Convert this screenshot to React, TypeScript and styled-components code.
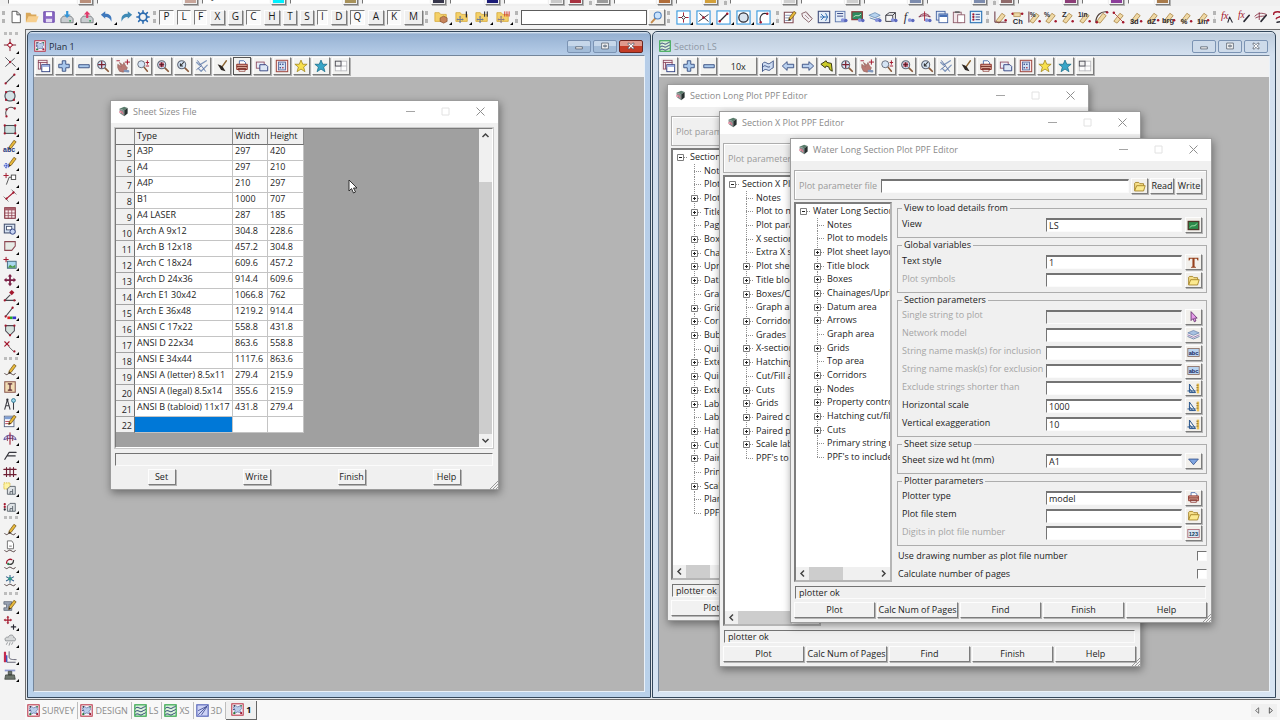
import React, { useId } from 'react';
import styled, { createGlobalStyle, css } from 'styled-components';

const GlobalStyle = createGlobalStyle`
  *, *::before, *::after { box-sizing: border-box; }
  html, body, #root { height: 100%; }
  body { margin: 0; background: #f0f0f0; overflow: hidden; }
  body, button, input, table, legend { font-family: "Open Sans", "Noto Sans", sans-serif; font-size: 9px; color: #1c1c1c; }
`;

/* ---------- shared edges ---------- */

const raised = css`
  border: 1px solid;
  border-color: #fdfdfd #7c7c7c #7c7c7c #fdfdfd;
  box-shadow: 1px 1px 0 #b4b4b4;
`;
const sunken = css`
  border: 1px solid;
  border-color: #747474 #fbfbfb #fbfbfb #747474;
`;

/* ---------- icons ---------- */

const RED = '#a3182e';
const INK = '#2a2a33';
const NAVY = '#28397c';
const STEEL = '#7f96bb';

const line = (d: string, stroke = INK, w = 1.2, fill = 'none') => (
  <path d={d} stroke={stroke} strokeWidth={w} fill={fill} strokeLinecap="round" strokeLinejoin="round" />
);
const dot = (x: number, y: number, c = RED, r = 1.3) => <circle cx={x} cy={y} r={r} fill={c} />;
const word = (t: string, x: number, y: number, c = INK, s = 7) => (
  <text x={x} y={y} fontSize={s} fontWeight="700" fontFamily="Liberation Sans, sans-serif" fill={c}>{t}</text>
);
const pencil = (
  <>
    <path d="M7 9 12.500 1.500 15 3.200 9.500 10.500 6.500 12z" fill="#e8b93a" stroke="#6b4d16" strokeWidth=".8" />
    <path d="M6.500 12 7 9.500 9 11z" fill="#33281a" />
  </>
);
const lens = (extra: React.ReactNode) => (
  <>
    {line('M9.800 9.800 14 14', '#8b5a3a', 2)}
    <circle cx="6.500" cy="6.500" r="4.600" fill="#d5e4f4" stroke="#5f6675" strokeWidth="1.200" />
    {extra}
  </>
);
const planMark = (
  <>
    <rect x="1" y="1" width="14" height="14" fill="#f7f3f8" stroke="#b6263a" strokeWidth="1.200" />
    <path d="M3 5 6 3 8 5 12 3 13 7 11 9 13 12 8 11 4 13 5 9z" fill="#b9cdea" stroke="#6472a4" strokeWidth=".9" />
    {dot(4, 3.5, INK, 1)}{dot(12.5, 12.5)}{dot(4, 12.5, '#2b7d3c')}{dot(12.5, 3.5, '#2b7d3c', 1)}{dot(3.5, 8, NAVY, 1)}
  </>
);
const waveMark = (
  <>
    <rect x="1" y="1" width="14" height="14" fill="#d9f2d9" stroke="#2ca345" strokeWidth="1.400" />
    {line('M2 5c3-3 5 2 8 0s3-1 4-2M2 9c3-3 5 2 8 0s3-1 4-2M2 13c3-3 5 2 8 0s3-1 4-2', '#1d2f6c', 1.2)}
  </>
);
const folder = (
  <>
    <path d="M2 13V4l1-1h4l1.500 1.500H13V7" fill="#f7e08a" stroke="#9c7a1b" strokeWidth="1" />
    <path d="M2 13.500 4.500 7H15l-2 6.500z" fill="#fbe98f" stroke="#9c7a1b" strokeWidth="1" />
  </>
);
const bigFolder = <path d="M1 13V3h5l1.500 2H14v8z" fill="#f4d068" stroke="#d1a02a" strokeWidth=".8" />;
const blueBox = <rect x="1" y="1" width="14" height="14" fill="#fff" stroke="#3b9be0" strokeWidth="1.200" />;
const tag = <path d="M3 12 9.500 3.500 13 6 6.500 14z" fill="#efd9a6" stroke="#b08b4c" strokeWidth=".9" />;
const building = <path d="M5 14V8l3-3h6v9zM8 11h3M8 14v-3M11 14V8" fill="#dfe3e6" stroke="#555d66" strokeWidth="1" />;
const printer = (
  <>
    <path d="M5 6V2h5l2 2v2" fill="#fff" stroke="#4467a8" strokeWidth="1" />
    <path d="M2 6h12v6H2z" fill="#dba596" stroke="#8b2f25" strokeWidth="1.100" />
    {line('M2.500 8.500h11M4 11h8', '#6a221b', 1)}
    <path d="M4.500 12h7v2h-7z" fill="#fff" stroke="#7b1f19" strokeWidth=".8" />
  </>
);
const star = (c: string, s: string) => (
  <path d="M8 1.200 10 6h5l-4 3.200 1.500 5.300L8 11.500l-4.500 3L5 9.200 1 6h5z" fill={c} stroke={s} strokeWidth=".9" />
);
const cubes = <><circle cx="10" cy="11.500" r="2.200" fill="#8793dc" /><circle cx="13.500" cy="12" r="2" fill="#5b68bd" /></>;
const arrows4 = (c: string) => (
  <path d="M8 1 10.500 4H9v3h3V5.500L15 8l-3 2.500V9H9v3h1.500L8 15l-2.500-3H7V9H4v1.500L1 8l3-2.500V7h3V4H5.500z" fill={c} />
);
const curve = line('M2 12c3 4 4-2 7 0s4 2 5 0', '#4d3b3b', 1.1);

const glyphs: Record<string, React.ReactNode> = {
  newFile: <path d="M3.500 1.500h5.500l4 4v9H3.500zM9 1.500V5.500H13" fill="#fff" stroke="#4a4a4a" strokeWidth="1" />,
  open: <><path d="M1 14V3h5l1.500 2H13v3" fill="#d9a85b" /><path d="M1 14 4 7h11.500L13 14z" fill="#f7cf8e" /></>,
  save: <><path d="M2 2h12v12H2z" fill="#8b69c4" stroke="#6440a6" strokeWidth="1" /><path d="M4.500 2.500h7V7h-7z" fill="#fff" /><path d="M4.500 10h7v4h-7z" fill="#e5dcf3" /></>,
  importDisk: <><path d="M1 10 3.500 7h9L15 10v4.500H1z" fill="#c8ccd0" stroke="#5c6166" strokeWidth=".8" /><path d="M7 1h2.500v4H12L8 9 4.500 5H7z" fill="#3595d8" />{dot(11.5, 12.3, '#2aa052', 1)}</>,
  exportDisk: <><path d="M1 10 3.500 7h9L15 10v4.500H1z" fill="#c8ccd0" stroke="#5c6166" strokeWidth=".8" /><path d="M7 9h2.500V5H12L8 1 4.500 5H7z" fill="#e03a6c" />{dot(11.5, 12.3, '#2aa052', 1)}</>,
  undo: <path d="M1 5.500 6 1.500v2.800c5 0 8 2 7 9C11 9 9 8 6 8v2z" fill="#3f79bd" />,
  redo: <path d="M15 5.500 10 1.500v2.800c-5 0-8 2-7 9C5 9 7 8 10 8v2z" fill="#3f8ab5" />,
  gear: <><circle cx="8" cy="8" r="4.300" fill="none" stroke="#2d6cb0" strokeWidth="2" />{line('M8 1v2M8 13v2M1 8h2M13 8h2M3 3l1.500 1.500M11.500 11.500 13 13M3 13l1.500-1.500M11.500 4.500 13 3', '#2d6cb0', 1.8)}</>,
  folderCube: <>{bigFolder}<path d="m11 7 4 2v4l-4 2-4-2V9z" fill="#c7835a" stroke="#7c4628" strokeWidth=".7" /></>,
  folderOne: <>{bigFolder}<g transform="translate(1 6) scale(.6)">{arrows4('#6c7c96')}</g>{line('M13 2v6', INK, 1.4)}</>,
  folderTwo: <>{bigFolder}<g transform="translate(1 6) scale(.6)">{arrows4('#6c7c96')}</g>{line('M11 2v5M14 2v5', INK, 1.2)}</>,
  folderThree: <>{bigFolder}<g transform="translate(1 6) scale(.6)">{arrows4('#8d7c86')}</g>{line('M10 2v5M12.500 2v5M15 2v5', '#c22', 1)}</>,
  search: <>{line('M6.500 9 2 14', '#c58a4a', 2.4)}<circle cx="9.500" cy="5.500" r="4.300" fill="#c9e2fb" stroke="#4b7fc0" strokeWidth="1.300" /></>,
  snapPoint: <>{blueBox}{line('M8 3v10M3 8h10', RED, 1)}<path d="M8 6l2 2-2 2-2-2z" fill="#fff" stroke={INK} /></>,
  snapCross: <>{blueBox}{line('M4 4l9 8M3 12l10-7', INK, 1)}{dot(8, 8)}</>,
  snapLine: <>{blueBox}{line('M4 12 12 4', INK, 1.3)}{dot(4, 12)}{dot(12, 4)}</>,
  snapCircle: <>{blueBox}<circle cx="8" cy="8" r="5" fill="#d9e3ee" stroke={INK} strokeWidth="1.300" /></>,
  snapArc: <>{blueBox}{line('M12 4C6 2 3 8 5 13', INK, 1.2)}{dot(12, 4)}{dot(5, 13)}</>,
  notePencil: <><path d="M1.500 2.500h10v12h-10z" fill="#fff" stroke="#7d4650" strokeWidth="1.200" />{line('M3 6h6M3 9h4M3 12h6', '#7788aa', 1)}{pencil}</>,
  tagPen: <><path d="M2 4 7 2l7 8-4 4-7-6z" fill="#f2eef0" stroke="#7f5a60" strokeWidth="1" />{line('M6 6l4 4M8 4l5 5', '#8d6a72', .8)}</>,
  sheetMove: <><rect x="1.500" y="1.500" width="13" height="13" fill="#e4edf8" stroke="#45537f" strokeWidth="1.300" />{line('M4 8h8M8 8 5 5M8 8l-3 3M10 4l2 4-2 4', '#2e6ab0', 1.1)}</>,
  sheetCubes: <><rect x="1.500" y="1.500" width="11" height="12" fill="#e4edf8" stroke="#5671a8" strokeWidth="1" />{line('M4 4h6M4 7h6', NAVY, 1)}{cubes}</>,
  viewCubes: <><rect x="1" y="2" width="12" height="9" fill="#2c8b60" stroke="#8c3d3d" strokeWidth="1.400" />{line('M3 8c3-4 5 1 8-3', '#e2f5d8', 1)}{cubes}</>,
  layersCubes: <><path d="M1 6 8 3l6 3-6 3z" fill="#b7d3ee" stroke="#5881ad" strokeWidth=".8" /><path d="M2 9l6 2 6-2" fill="none" stroke="#5881ad" />{cubes}</>,
  boxCubes: <><path d="M2 6 6 3h7v7l-3 3H2zM2 6h8v7M10 6l3-3" fill="#f6f6f6" stroke={INK} strokeWidth="1" />{cubes}</>,
  fxCubes: <><text x="3" y="12" fontSize="14" fontStyle="italic" fontFamily="Liberation Serif, serif" fill={INK}>f</text>{cubes}</>,
  sectionCubes: <><path d="M1 8c3-5 10-5 13 0-4-2-9-2-13 0z" fill="#ead0d8" stroke="#7d2c45" strokeWidth="1" />{line('M7.500 2v10', RED, 1)}{cubes}</>,
  windowsBlue: <><rect x="1.500" y="1.500" width="10" height="10" fill="#dfe9f6" stroke="#3f5f9f" /><rect x="4.500" y="4.500" width="10" height="10" fill="#fff" stroke="#3f5f9f" /><path d="M5 5h9v3H5z" fill="#476fb5" /></>,
  paste: <><rect x="1.500" y="2.500" width="9" height="12" fill="#f2e6e9" stroke="#8c5a68" /><rect x="6.500" y="5.500" width="8" height="9" fill="#fff" stroke="#8c5a68" />{line('M4 2.500h4', '#666', 2)}</>,
  checklist: <><rect x="1.500" y="1.500" width="13" height="13" fill="#e8f2fb" stroke="#2e74b5" strokeWidth="1.300" />{line('M8 5h4M8 8h4M8 11h4', NAVY, 1)}{dot(5, 5)}{dot(5, 8)}{dot(5, 11)}</>,
  tagAxis: <>{tag}{line('M2 2v11h12', '#5d2330', 1)}{dot(13.5, 11)}</>,
  tagCh: <>{line('M2 4h11', RED, 1)}{dot(3, 4)}{dot(13, 4)}<path d="M4 3h7v4H4z" fill="#efd9a6" stroke="#b08b4c" strokeWidth=".8" />{word('Ch', 3, 14.5, INK, 8)}</>,
  tagPctAxis: <>{tag}{line('M2 2v11', '#5d2330', 1)}{word('%', 3, 7, INK, 7)}{dot(13.5, 12)}</>,
  tagPct: <>{tag}{word('%', 1, 7, INK, 7)}{dot(13.5, 12)}</>,
  tagZ: <>{tag}{word('Z', 2, 7, INK, 8)}{dot(13.5, 12)}</>,
  tag1in: <>{tag}{word('1in', 1, 7, INK, 7)}{dot(13.5, 12)}</>,
  tagArc: <>{tag}{line('M2 13C2 6 7 1 14 2', '#51413a', 1.3)}{dot(3, 13)}{dot(14, 2.5)}</>,
  tagX: <>{tag}{line('M3 3l10 10', '#b05945', 1)}{dot(3, 3)}{dot(13, 13)}</>,
  tag3d: <>{tag}{word('3d', 2, 15, INK, 8)}{dot(14, 12)}</>,
  tagdZ: <>{tag}{word('dZ', 2, 15, INK, 8)}{dot(14, 11)}</>,
  tagbrg: <>{tag}{word('brg', 1, 14, INK, 8)}{dot(14, 11)}</>,
  tagPct2: <>{tag}{word('%', 3, 15, INK, 8)}{dot(14, 12)}</>,
  tag1in2: <>{tag}{word('1in', 2, 15, INK, 8)}{dot(14, 11)}</>,
  fxA: <><text x="1" y="10" fontSize="12" fontStyle="italic" fontFamily="Liberation Serif, serif" fill={RED}>fx</text>{line('M9 14l2-6 3 6', INK, 1.2)}</>,
  fxB: <><text x="1" y="9" fontSize="11" fontStyle="italic" fontFamily="Liberation Serif, serif" fill={RED}>fx</text>{line('M8 13l6-7', INK, 1.8)}</>,
  sectPen: <>{line('M1 7c4-4 8-4 13-2M2 9c4-2 7-2 10-2M6 3v8', '#8b3548', 1)}{line('M8 13l6-7', INK, 1.8)}</>,
  ringPen: <>{line('M3 5c0-4 9-4 9 0s-6 3-6 5', RED, 1.6)}{line('M7 14l6-1', INK, 1.8)}</>,

  point: <>{line('M8 1.500v13M1.500 8h13', '#7a2230', 1.1)}<path d="M8 5l3 3-3 3-3-3z" fill="#fff" stroke={RED} strokeWidth="1.200" /></>,
  intersect: <>{line('M3 3l4 4M10 9l4 4M3 13 13 4', '#54545c', 1.1)}{dot(8, 8)}</>,
  segment: <>{line('M3 13 13 3', '#4b4b50', 1.3)}{dot(3, 13)}{dot(13, 3)}</>,
  circle: <><circle cx="8" cy="8" r="5.800" fill="#d4e2e6" stroke="#3f4650" strokeWidth="1.200" />{dot(3.5, 3.5)}{dot(12.5, 3.5)}{dot(3.5, 12.5)}{dot(12.5, 12.5)}</>,
  arc: <>{line('M13 4C7 0 1 6 4 13', '#5b5358', 1.2)}{dot(13.5, 4)}{dot(4, 13)}{dot(4, 5)}</>,
  rect: <><rect x="2" y="4" width="12" height="9" fill="#cfe0df" stroke="#465055" strokeWidth="1.200" />{dot(2, 13)}{dot(14, 4)}{dot(14, 13)}{dot(2, 4)}</>,
  textPen: <>{pencil}{word('abc', 0, 15, NAVY, 8)}</>,
  symbolPen: <>{pencil}<circle cx="4" cy="11" r="2.500" fill="#d9e4fb" stroke="#4b5fc9" strokeWidth="1.200" strokeDasharray="2 1" />{dot(4, 11, '#4b5fc9')}</>,
  leader: <>{line('M1 4h5M3.500 1.500v5', RED, 1.1)}{line('M4 14 7 6h3', '#444', 1)}<rect x="9.500" y="3.500" width="5" height="5" fill="#fff" stroke="#444" /></>,
  dimension: <>{line('M4 11 12 4', RED, 1.2)}{line('M1 9l5 5M10 1l5 5', '#777', 1)}{dot(4, 11)}{dot(12, 4)}</>,
  table: <><rect x="2" y="2" width="12" height="12" fill="#fbeef0" stroke="#7a2230" strokeWidth="1.200" /><path d="M2 2h12v3H2z" fill="#a8606c" />{line('M2 8h12M2 11h12M6 5v9M10 5v9', '#8d4350', .9)}</>,
  viewport: <><rect x="1.500" y="2.500" width="12" height="10" fill="#d7e3f3" stroke="#44506e" strokeWidth="1.200" /><rect x="4" y="5" width="6" height="4" fill="#fff" stroke="#44506e" /><circle cx="11" cy="11" r="3" fill="#c7d4f2" stroke={NAVY} /></>,
  polygon: <path d="M2 3h12v5l-4 5H2z" fill="#e6ebe6" stroke="#8c4650" strokeWidth="1.200" />,
  picture: <>{line('M1 4h5M3.500 1.500v5', RED, 1.2)}<rect x="5" y="6" width="10" height="8" fill="#a8d7ee" stroke="#3c6277" /><path d="M5.500 13.500 8 10l3 2 3-2v3.500z" fill="#4e9b4a" /></>,
  move: arrows4('#7a1f45'),
  angle: <>{line('M2 13h12M2 13l6-6', '#46464c', 1.2)}<path d="M10 1l3 3-3 3-3-3z" fill={RED} />{dot(2, 13)}{dot(13, 13)}</>,
  colourLine: <>{line('M3 12 11 2', '#46464c', 1.3)}{dot(3, 12)}{dot(11, 2)}<path d="M5 12h3v3H5z" fill="#d22" /><path d="M8 12h3v3H8z" fill="#2a2" /><path d="M11 12h4v3h-4z" fill="#33c" /></>,
  shield: <><path d="M3 3h10v6l-5 5-5-5z" fill="#d5e2dd" stroke="#4f4a55" strokeWidth="1.200" />{dot(3, 3)}{dot(13, 3)}{dot(8, 14)}</>,
  cut: <>{line('M2 2l5 5M7 2 2 7', RED, 1.3)}{line('M7 8l5 5', '#555', 1)}{dot(13, 13)}</>,
  drawCurve: <>{pencil}{curve}</>,
  beam: <><rect x="2" y="2" width="12" height="12" fill="#f2ddb5" stroke="#8c5a50" strokeWidth="1.200" />{line('M6 4.500h4M8 4.500v7M6 11.500h4', '#5b2430', 1.4)}</>,
  pins: <>{line('M2 14 5 3l3 11M3 10h4M12 6v8', '#3d3d44', 1.2)}<circle cx="12" cy="4" r="2.200" fill="#9fd8ea" stroke="#27708d" />{dot(5, 3, INK)}</>,
  listPen: <><rect x="1.500" y="2.500" width="11" height="12" fill="#fff" stroke="#52607f" /><path d="M2 3h10v3H2z" fill="#7f9fd4" />{line('M3 8.500h6M3 11h6', RED, .9)}{pencil}</>,
  section: <><path d="M1 10c1-7 13-7 14 0-5-2-9-2-14 0z" fill="#c9cdf0" stroke="#5d4d97" strokeWidth="1.100" />{line('M8 2v13', RED, 1.2)}{line('M5 6v5M11 6v5', '#8b3548', 1)}</>,
  batter: line('M2 13 7 5h8M5 9h9', '#37373d', 1.2),
  fence: line('M1 5h14M1 11h14M4 3v10M8 3v10M12 3v10', '#6e1f33', 1.3),
  houseStar: <><path d="M1 1h7v7H1z" fill="#fdf3a6" stroke="#d9b72c" strokeWidth="1" strokeDasharray="1.500 1" />{building}</>,
  houseDots: <>{building}{dot(2, 6)}{dot(2, 9)}{dot(2, 12, INK)}</>,
  pageCurve: <><path d="M5 1h5l2 3v6H5zM7 7h3" fill="#fff" stroke="#666" strokeWidth="1" />{curve}</>,
  swapCurve: <>{line('M4 7c0-4 4-5 6-4', RED, 1.5)}{line('M12 4c0 4-3 5-6 4', '#3a3a3a', 1.5)}{dot(6, 8, '#2c7b4b')}{curve}</>,
  starCurve: <><path d="M8 1v9M3.500 3l9 5M12.500 3l-9 5" stroke="#36608c" strokeWidth="1.200" />{dot(8, 5.5, '#2c9b88', 2)}{curve}</>,
  beamPen: <><path d="M1 3h9v3H7v4h3v3H1v-3h3V6H1z" fill="#9aa4b4" stroke="#555f70" strokeWidth=".8" />{pencil}</>,
  moveAdd: <><g transform="translate(0 -1) scale(.7)">{arrows4(RED)}</g>{line('M12 10v5M9.500 12.500h5', INK, 1.3)}</>,
  cloud: <><path d="M3 9c-2-3 1-5 3-4 1-4 7-3 6 0 3 0 3 4 1 4z" fill="#d5d7d8" stroke="#8c8f92" />{line('M5 11l-1 2M8 11l-1 3M11 11l-1 2', '#8c8f92', 1)}</>,
  profile: <><path d="M1 2h2.500v12H1z" fill="#c32a4e" /><path d="M3.500 6H5v8H3.500z" fill="#3948b8" />{line('M7 2v6c0 3 4 3 8 3M5 14h9', '#556', 1)}</>,
  stamp: <><path d="M2 3h12v2H2z" fill="#8f9bd0" /><path d="M6 5h4v4H6zM3 9h10l1 5H2z" fill="#6c756c" stroke="#333b33" strokeWidth=".8" /></>,

  layout: <><rect x="1.500" y="1.500" width="10" height="10" fill="#f5e9ee" stroke="#8d4a60" strokeWidth="1" />{line('M1.500 4h10M4 4v7', '#8d4a60', 1)}<rect x="5.500" y="6.500" width="9" height="8" fill="#fff" stroke={NAVY} strokeWidth="1" /><path d="M6 7h8v2H6z" fill="#96abe0" /></>,
  plus: <path d="M6 2h4v4h4v4h-4v4H6v-4H2V6h4z" fill="#a9c8ec" stroke="#34497d" strokeWidth="1" />,
  minus: <path d="M2 6.500h12v3.500H2z" fill="#a9c8ec" stroke="#34497d" strokeWidth="1" />,
  zoomFit: lens(line('M6.500 3v7M3 6.500h7', '#7a2230', 1.4)),
  pan: <><path d="M2 6l4 3-2-5 4 3 1-3 2 4 2 2-2 4-3 1-4-1-2-4z" fill="#b97a74" stroke="#8e5a54" strokeWidth=".7" />{line('M10 13.500l4 .5', STEEL, 2.6)}{line('M13 1v5M10.500 3.500h5', RED, 1.1)}{line('M1 2h3', RED, 1)}</>,
  zoomInOut: <>{line('M9 9 13 14', '#8b5a3a', 1.8)}<circle cx="6" cy="6" r="4" fill="#d5e4f4" stroke="#5f6675" />{line('M13 2v4M11.500 4h3M11.500 8h3', RED, 1.1)}</>,
  zoomBox: lens(<><rect x="4" y="4" width="5" height="5" fill="#c35a6a" />{line('M4 6.500h5M6.500 4v5', '#4c1220', 1)}</>),
  zoomPrev: lens(line('M8.500 4 5 8V5.500M5 8h2.500', '#333', 1.3)),
  ticks: <>{line('M2 4l3 3 8-5M4 11l3 3 7-7', STEEL, 1.5)}{line('M3 2l9 12M2 12l5-4', '#5f76a5', 1.1)}</>,
  brush: <>{line('M13 2 8 9', '#8b6432', 1.6)}<path d="M3 6l4 1.500L9 9l3 5-5-1.500z" fill="#2c2622" /></>,
  print: printer,
  copyView: <><rect x="1.500" y="3.500" width="9" height="7" fill="#e8edf8" stroke="#8d4a60" strokeWidth="1" /><path d="M5.500 6.500h7l2 2v5h-9z" fill="#dde7f5" stroke={NAVY} strokeWidth="1" /></>,
  calc: <><rect x="1.500" y="1.500" width="13" height="13" fill="#fbe9ea" stroke="#a04c44" strokeWidth="1.200" /><rect x="4" y="3.500" width="8" height="9" fill="#cfe0f3" stroke="#56689c" strokeWidth="1" />{dot(6, 6, NAVY, .9)}{dot(9, 6, NAVY, .9)}{dot(6, 10, NAVY, .9)}{dot(9, 10, RED, .9)}</>,
  starGold: star('#f8e04c', '#a5881c'),
  starBlue: star('#37a6c8', '#1d6f8c'),
  split: <><rect x="1.500" y="2.500" width="13" height="11" fill="#fdfdfd" stroke="#b9b9bd" />{line('M8 2.500v11M1.500 8h13', '#b9b9bd', 1)}<rect x="1.500" y="2.500" width="6.500" height="5.500" fill="#eee" stroke="#4d4d55" /></>,
  waves: line('M2 5c3-4 5 2 8 0s3-2 4-3v8c-3 1-3 3-5 3s-4-3-7 1zM2 9c3-4 5 2 8 0', '#3f5585', 1.1, '#cddcf2'),
  left: <path d="M1.500 8 7 3v3h7.500v4H7v3z" fill="#b9d0ee" stroke="#34497d" strokeWidth="1" />,
  right: <path d="M14.500 8 9 3v3H1.500v4H9v3z" fill="#b9d0ee" stroke="#34497d" strokeWidth="1" />,
  swoop: <path d="M1 6 7 2l1 2 5 1 1 9-3-2-1-3-3-1-1 2z" fill="#c9c928" stroke="#36360f" strokeWidth="1.100" />,
  planMark, waveMark, folder,
  cube3d: <><rect x="1" y="1" width="14" height="14" fill="#cdd3f6" stroke="#5563b8" strokeWidth="1.400" />{line('M3 13 14 2M3 8l10-5M7 13l6-9', '#3a468c', 1)}</>,
  appCube: <><path d="M2 4 9 1l5 2-5 3z" fill="#5b7d6d" /><path d="M9 6l5-3v8l-5 4z" fill="#26302f" /><path d="M2 4l7 2v9l-6-4z" fill="#7f8f8b" />{line('M3 8c2-1 3 1 4 3', '#d97b92', 2)}{dot(3, 9, '#e9a4b4', 1.5)}</>,
  viewGreen: <><rect x="1.500" y="3" width="13" height="10" fill="#2b8a4b" stroke="#4e3528" strokeWidth="1.600" />{line('M4 10c2-4 5 1 8-4', '#bff0bf', 1)}</>,
  bigT: <path d="M2 2h12v3.500h-1L12 3.500H9.300V13l1.700.500v1H5v-1L6.700 13V3.500H4L3 5.500H2z" fill="#96401c" />,
  pick: <path d="M5 2v11l2.500-2.500L9 14.500l2-1-1.500-3.500h3z" fill="#e59ae8" stroke="#5e2a68" strokeWidth="1" />,
  layers: <><path d="M1 6 8 3l7 3-7 3z" fill="#a7c1e2" stroke="#5b76a2" strokeWidth=".8" />{line('M1 8.500l7 3 7-3', '#8a6ab0', 1)}{line('M1 10.500l7 3 7-3', '#5b76a2', 1)}</>,
  abc: <><rect x="1" y="3" width="14" height="10" fill="#b8d3ef" stroke="#8a6a5c" strokeWidth="1" />{word('abc', 2, 11, '#14235c', 7)}</>,
  measure: <>{line('M3 3v10h7zM3 8l4 5M1 11h9', '#28548c', 1.2)}<path d="M12 2h3v12h-3z" fill="#e9c257" />{line('M12 4h1.500M12 7h1.500M12 10h1.500', '#6b4d16', .8)}</>,
  drop: <path d="M2 5h12l-6 7z" fill="#7fa5e0" stroke="#31508c" strokeWidth="1" />,
  digits: <><rect x="1" y="3" width="14" height="10" fill="#dce8f4" stroke="#a8606c" strokeWidth="1" />{word('123', 2, 11, '#14405c', 7)}</>,
};

const Svg = styled.svg<{ $s: number }>`
  width: ${(p) => p.$s}px;
  height: ${(p) => p.$s}px;
  flex: none;
  display: block;
  overflow: visible;
`;
const Icon = ({ name, size = 13 }: { name: string; size?: number }) => (
  <Svg $s={size} viewBox="0 0 16 16" aria-hidden="true">{glyphs[name]}</Svg>
);

/* ---------- application toolbars ---------- */

const Shell = styled.div`
  height: 100vh;
  display: flex;
  flex-direction: column;
  background: #f0f0f0;
  overflow: hidden;
`;
const CutBar = styled.div`
  height: 6px;
  flex: none;
  display: flex;
  align-items: flex-end;
  padding: 0 0 1px 8px;
  overflow: hidden;
`;
const CutField = styled.input<{ $w: number }>`
  ${sunken}
  width: ${(p) => p.$w}px;
  height: 18px;
  flex: none;
  margin: 0 1px 1px 0;
  padding: 0 4px;
  background: #fff;
`;
const CutButton = styled.button<{ $c: string }>`
  ${raised}
  width: 15px;
  height: 18px;
  flex: none;
  padding: 0 1px;
  margin-right: 4px;
  background: linear-gradient(#f0f0f0 4px, ${(p) => p.$c} 4px, ${(p) => p.$c} 15px, #f0f0f0 15px);
  background-clip: content-box;
`;
const ToolBar = styled.div`
  height: 22px;
  flex: none;
  display: flex;
  align-items: center;
  overflow: hidden;
  background: #f3f3f3;
`;
const Grip = styled.span`
  width: 3px;
  height: 12px;
  flex: none;
  margin: 0 3px 0 2px;
  border-left: 3px dotted #b5b5b5;
`;
const ToolGroup = styled.div<{ $w: number; $n: number }>`
  display: grid;
  grid-template-columns: repeat(${(p) => p.$n}, 1fr);
  width: ${(p) => p.$w}px;
  flex: none;
`;
const corner = css`
  &::after {
    content: '';
    position: absolute;
    right: 0;
    bottom: 0;
    border-left: 3px solid transparent;
    border-bottom: 3px solid #000;
  }
`;
const Tool = styled.button<{ $menu?: boolean }>`
  position: relative;
  display: flex;
  align-items: center;
  justify-content: center;
  min-width: 0;
  height: 16px;
  padding: 0;
  border: 0;
  background: none;
  ${(p) => p.$menu && corner}
`;
const Letters = styled.div`
  display: flex;
  gap: 3px;
  flex: none;
`;
const Letter = styled.button<{ $w: number; $on: boolean }>`
  ${raised}
  ${(p) => p.$on && css`border-color: #7c7c7c #fff #fff #7c7c7c; box-shadow: none;`}
  width: ${(p) => p.$w}px;
  height: 15px;
  padding: 0 0 2px;
  line-height: 11px;
  font-size: 10px;
  background: ${(p) => (p.$on ? '#fafafa' : '#efefef')};
`;
const SearchField = styled.input`
  width: 126px;
  height: 15px;
  flex: none;
  margin: 0;
  border: 1px solid #5c5c5c;
  background: #fff;
`;
const SquareButton = styled.button`
  ${raised}
  display: flex;
  align-items: center;
  justify-content: center;
  width: 17px;
  height: 16px;
  flex: none;
  padding: 0;
  background: #f2f0ec;
`;
const SearchButton = styled(SquareButton)`
  margin-left: 1px;
`;

const cutItems: [width: number, colour: string, value?: string, gripAfter?: boolean][] = [
  [69, '#b98f7a'], [85, '#c7a59a', 'base'], [68, '#00f0ff', 'cyan'], [52, '#a8925a'], [68, '#35354a', '*'],
  [34, '#1c1c78'], [44, '#c9c9c9'], [0, '#a83240', '', true], [0, '#9b9b9b'], [42, '#b06d3a', '*'], [26, '#d3a03a', '*', true],
  [51, '#cfcfcf'], [43, '#cfcfcf'], [43, '#7d8cae'], [44, '#7d8cae', '', true], [0, '#8f6a6a'], [44, '#8c3d77'], [26, '#8c3d9a', '*'], [26, '#a97b4b', '*'],
];
const letters: [string, number, boolean][] = [
  ['P', 15, true], ['L', 14, true], ['F', 13, true], ['X', 15, false], ['G', 15, false], ['C', 15, true], ['H', 16, false],
  ['T', 14, false], ['S', 14, false], ['I', 11, true], ['D', 16, false], ['Q', 15, true], ['A', 16, false], ['K', 14, true], ['M', 19, false],
];
const Group = ({ names, width, menus, size = 14 }: { names: string; width: number; menus?: boolean; size?: number }) => {
  const list = names.split(' ');
  return (
    <ToolGroup $w={width} $n={list.length}>
      {list.map((n) => (
        <Tool key={n} aria-label={n} $menu={menus}><Icon name={n} size={size} /></Tool>
      ))}
    </ToolGroup>
  );
};

/* ---------- side toolbar ---------- */

const Body = styled.div`
  flex: 1;
  min-height: 0;
  display: flex;
`;
const Side = styled.nav`
  width: 25px;
  flex: none;
  padding: 2px 6px 0 3px;
  background: #f3f3f3;
`;
const SideGrip = styled.div`
  height: 3px;
  margin: 2px 1px;
  border-top: 3px dotted #bdbdbd;
`;
const SideGroup = styled.div<{ $h: number }>`
  height: ${(p) => p.$h}px;
  display: flex;
  flex-direction: column;
  & > button { flex: 1; min-height: 0; padding-right: 2px; }
`;
const sideGroups: [number, string][] = [
  [318, 'point intersect segment circle arc rect textPen symbolPen leader dimension table viewport polygon picture move angle colourLine shield cut'],
  [152, 'drawCurve beam pins listPen section batter fence houseStar houseDots'],
  [69, 'drawCurve pageCurve swapCurve starCurve'],
  [85, 'beamPen moveAdd cloud profile stamp'],
];

/* ---------- child windows ---------- */

const Main = styled.main`
  flex: 1;
  min-width: 0;
  display: flex;
  flex-direction: column;
`;
const Mdi = styled.div`
  flex: 1;
  min-height: 0;
  display: flex;
  gap: 1px;
  margin-top: 1px;
  padding: 1px 4px 1px 1px;
  border: solid #6b6b6b;
  border-width: 1px 0 1px 1px;
  background: #e4e8ec;
`;
const Child = styled.section<{ $active: boolean }>`
  flex: 1;
  min-width: 0;
  display: flex;
  flex-direction: column;
  padding: 0 5px 5px;
  border: 1px solid #35485c;
  border-radius: 5px 5px 0 0;
  background: ${(p) => (p.$active
    ? 'linear-gradient(#e8f0f8 0, #96b1d2 2px, #b6cde8 23px, #b9d1ea)'
    : 'linear-gradient(#eef3f9 0, #bfcddd 2px, #d3e0ef 23px, #d7e4f2)')};
`;
const ChildTitle = styled.header<{ $active: boolean }>`
  height: 23px;
  flex: none;
  display: flex;
  align-items: center;
  gap: 2px;
  padding: 5px 2px 0 1px;
  color: ${(p) => (p.$active ? '#1f2c3c' : '#8d97a3')};
`;
const ChildName = styled.span`
  margin-left: 1px;
`;
const Push = styled.span`
  flex: 1;
`;
const Caption = styled.button<{ $kind: 'active' | 'idle' | 'close' }>`
  width: 24px;
  height: 13px;
  flex: none;
  display: flex;
  align-items: center;
  justify-content: center;
  padding: 0;
  border: 1px solid ${(p) => (p.$kind === 'close' ? '#6c2620' : '#7b93b3')};
  border-radius: 2px;
  background: ${(p) => ({ active: 'linear-gradient(#c6d7ea 50%, #a3bcd8 50%)', idle: '#cedbea', close: 'linear-gradient(#df9a8d 50%, #c33c27 50%)' })[p.$kind]};
`;
const Client = styled.div`
  flex: 1;
  min-height: 0;
  display: flex;
  flex-direction: column;
  border: 1px solid #74869b;
  border-color: #74869b #eaf1f8 #eaf1f8 #74869b;
`;
const ViewBar = styled.div`
  height: 21px;
  flex: none;
  background: #f1f1f1;
`;
const ViewTools = styled.div<{ $n: number; $w: number }>`
  width: ${(p) => p.$w}px;
  height: 20px;
  display: grid;
  grid-template-columns: repeat(${(p) => p.$n}, 1fr);
  padding: 1px 0 0 1px;
`;
const ViewTool = styled.button<{ $wide?: boolean; $on?: boolean }>`
  ${raised}
  ${(p) => p.$wide && 'grid-column: span 2;'}
  display: flex;
  align-items: center;
  justify-content: center;
  min-width: 0;
  height: 18px;
  margin-right: 2px;
  padding: 0;
  background: #f3f3f1;
  ${(p) => p.$on && 'border-color: #555;'}
`;
const Workspace = styled.div`
  position: relative;
  flex: 1;
  min-height: 0;
  overflow: hidden;
  background: #b4b4b4;
`;

const captionGlyphs = { min: 'M2 7h8v2.500H2z', max: 'M2 2.500h8v7H2zM4.500 5h3v2h-3z', close: 'M2.500 2.500l1.500 0 2 2 2-2h1.500v1.500l-2 2 2 2v1.500H8l-2-2-2 2H2.500V8l2-2-2-2z' };
const ChildWindow = ({ title, icon, active, tools, width, zoom, children }: {
  title: string; icon: string; active: boolean; tools: string[]; width: number; zoom?: string; children: React.ReactNode;
}) => (
  <Child $active={active}>
    <ChildTitle $active={active}>
      <Icon name={icon} size={12} /><ChildName>{title}</ChildName><Push />
      {(['min', 'max', 'close'] as const).map((k) => (
        <Caption key={k} aria-label={k} $kind={active ? (k === 'close' ? 'close' : 'active') : 'idle'}>
          <Svg $s={10} viewBox="0 0 12 12"><path d={captionGlyphs[k]} fill="#fdfdfd" stroke="#4a5361" strokeWidth=".9" fillRule="evenodd" /></Svg>
        </Caption>
      ))}
    </ChildTitle>
    <Client>
      <ViewBar>
        <ViewTools $n={tools.length + (zoom ? 2 : 0)} $w={width}>
          {tools.map((t, i) => (
            <React.Fragment key={t}>
              {zoom && i === 3 && <ViewTool $wide>{zoom}</ViewTool>}
              <ViewTool aria-label={t} $on={active && t === 'print'}><Icon name={t} size={14} /></ViewTool>
            </React.Fragment>
          ))}
        </ViewTools>
      </ViewBar>
      <Workspace>{children}</Workspace>
    </Client>
  </Child>
);
const commonTools = 'zoomFit pan zoomInOut zoomBox zoomPrev ticks brush print copyView calc starGold starBlue split'.split(' ');

/* ---------- dialogs ---------- */

const Frame = styled.div<{ $x: number; $y: number; $w: number; $h: number }>`
  position: absolute;
  left: ${(p) => p.$x}px;
  top: ${(p) => p.$y}px;
  width: ${(p) => p.$w}px;
  height: ${(p) => p.$h}px;
  display: flex;
  flex-direction: column;
  border: 1px solid #9c9c9c;
  background: #f0f0f0;
  box-shadow: 1px 3px 8px rgba(0, 0, 0, .4);
`;
const FrameTitle = styled.header`
  height: 22px;
  flex: none;
  display: flex;
  align-items: center;
  gap: 4px;
  padding: 0 0 2px 7px;
  background: #fff;
  color: #8a8a8a;
`;
const FrameButtons = styled.div`
  flex: 1;
  display: flex;
  justify-content: flex-end;
`;
const FrameButton = styled.button`
  width: 35px;
  height: 20px;
  padding: 0;
  border: 0;
  background: none;
  display: flex;
  align-items: center;
  justify-content: center;
`;
const FrameBody = styled.div`
  flex: 1;
  min-height: 0;
  display: flex;
  flex-direction: column;
  padding: 4px 4px 4px 3px;
`;
const SizeGrip = styled.svg`
  position: absolute;
  right: 0;
  bottom: 0;
  width: 9px;
  height: 9px;
`;
const Dialog = ({ title, x, y, w, h, children }: { title: string; x: number; y: number; w: number; h: number; children: React.ReactNode }) => (
  <Frame $x={x} $y={y} $w={w} $h={h} role="dialog" aria-label={title}>
    <FrameTitle>
      <Icon name="appCube" size={11} /><span>{title}</span>
      <FrameButtons>
        <FrameButton aria-label="Minimize"><Svg $s={9} viewBox="0 0 9 9"><path d="M0 4.500h9" stroke="#a5a5a5" /></Svg></FrameButton>
        <FrameButton aria-label="Maximize"><Svg $s={9} viewBox="0 0 9 9"><path d="M1 1h7v7H1z" fill="none" stroke="#e2e2e2" /></Svg></FrameButton>
        <FrameButton aria-label="Close"><Svg $s={9} viewBox="0 0 9 9"><path d="M.500.500l8 8M8.500.500l-8 8" stroke="#8f8f8f" /></Svg></FrameButton>
      </FrameButtons>
    </FrameTitle>
    <FrameBody>{children}</FrameBody>
    <SizeGrip viewBox="0 0 9 9"><path d="M1 9 9 1M4 9l5-5M7 9l2-2" stroke="#9a9a9a" /></SizeGrip>
  </Frame>
);
const PushButton = styled.button`
  ${raised}
  height: 16px;
  padding: 0 0 1px;
  line-height: 12px;
  white-space: nowrap;
  background: #f1f1f1;
`;
const Status = styled.output`
  ${sunken}
  display: block;
  height: 13px;
  flex: none;
  margin: 4px 1px 3px;
  padding: 0 3px;
  line-height: 11px;
`;

/* ---------- sheet sizes ---------- */

const SheetPane = styled.div`
  flex: 1;
  min-height: 0;
  display: flex;
  justify-content: space-between;
  border: 2px solid;
  border-color: #7a7a7a #fff #fff #7a7a7a;
  background: #a0a0a0;
  outline: 1px solid #c9c9c9;
  outline-offset: -1px;
`;
const SheetTable = styled.table`
  width: 188px;
  height: 304px;
  align-self: flex-start;
  table-layout: fixed;
  border-collapse: separate;
  border-spacing: 0;
  background: #fff;
  th, td { padding: 0 2px; text-align: left; font-weight: 400; white-space: nowrap; }
  thead th { height: 16px; background: #f0f0f0; border-right: 1px solid #8a8a8a; border-bottom: 1px solid #6f6f6f; line-height: 14px; vertical-align: top; }
  tbody th { height: 16px; text-align: right; vertical-align: bottom; line-height: 13px; background: #f0f0f0; border-right: 1px solid #6f6f6f; border-bottom: 1px solid #a2a2a2; }
  tbody td { vertical-align: top; line-height: 12px; border-right: 1px solid #c4c4c4; border-bottom: 1px solid #c4c4c4; }
`;
const SelectedCell = styled.td`
  background: #0078d7;
  background-clip: padding-box;
`;
const VScroll = styled.div`
  width: 13px;
  display: flex;
  flex-direction: column;
  background: #f0f0f0;
`;
const Arrow = styled.button`
  width: 13px;
  height: 13px;
  flex: none;
  display: flex;
  align-items: center;
  justify-content: center;
  padding: 0;
  border: 0;
  background: #f0f0f0;
`;
const VThumb = styled.div`
  flex: 1;
  margin-top: 40px;
  background: #cdcdcd;
`;
const Chevron = ({ d }: { d: string }) => <Svg $s={9} viewBox="0 0 9 9"><path d={d} fill="none" stroke="#444" strokeWidth="1.500" /></Svg>;
const SheetButtons = styled.div`
  display: grid;
  grid-template-columns: repeat(4, 1fr);
  justify-items: center;
  flex: none;
  & > button { width: 28px; }
`;
const sheets: [string, string, string][] = [
  ['A3P', '297', '420'], ['A4', '297', '210'], ['A4P', '210', '297'], ['B1', '1000', '707'], ['A4 LASER', '287', '185'],
  ['Arch A 9x12', '304.8', '228.6'], ['Arch B 12x18', '457.2', '304.8'], ['Arch C 18x24', '609.6', '457.2'], ['Arch D 24x36', '914.4', '609.6'],
  ['Arch E1 30x42', '1066.8', '762'], ['Arch E 36x48', '1219.2', '914.4'], ['ANSI C 17x22', '558.8', '431.8'], ['ANSI D 22x34', '863.6', '558.8'],
  ['ANSI E 34x44', '1117.6', '863.6'], ['ANSI A (letter) 8.5x11', '279.4', '215.9'], ['ANSI A (legal) 8.5x14', '355.6', '215.9'],
  ['ANSI B (tabloid) 11x17', '431.8', '279.4'],
];
const SheetSizes = () => (
  <Dialog title="Sheet Sizes File" x={76} y={23} w={389} h={390}>
    <SheetPane>
      <SheetTable>
        <colgroup><col width="19" /><col width="98" /><col width="35" /><col width="36" /></colgroup>
        <thead><tr><th /><th scope="col">Type</th><th scope="col">Width</th><th scope="col">Height</th></tr></thead>
        <tbody>
          {sheets.map((s, i) => (
            <tr key={s[0]}><th scope="row">{i + 5}</th><td>{s[0]}</td><td>{s[1]}</td><td>{s[2]}</td></tr>
          ))}
          <tr><th scope="row">22</th><SelectedCell /><td /><td /></tr>
        </tbody>
      </SheetTable>
      <VScroll>
        <Arrow aria-label="Scroll up"><Chevron d="M1.500 6 4.500 3l3 3" /></Arrow>
        <VThumb />
        <Arrow aria-label="Scroll down"><Chevron d="M1.500 3l3 3 3-3" /></Arrow>
      </VScroll>
    </SheetPane>
    <Status />
    <SheetButtons>{['Set', 'Write', 'Finish', 'Help'].map((b) => <PushButton key={b}>{b}</PushButton>)}</SheetButtons>
  </Dialog>
);

/* ---------- plot editors ---------- */

const FileBox = styled.div`
  height: 30px;
  flex: none;
  display: flex;
  align-items: center;
  gap: 2px;
  margin: 5px 0 2px;
  padding: 2px 4px 0;
  border: 1px solid #adadad;
  box-shadow: inset 1px 1px 0 #fff;
  color: #9a9a9a;
`;
const FileLabel = styled.label`
  width: 80px;
  flex: none;
  padding-bottom: 2px;
  white-space: nowrap;
`;
const Field = styled.input`
  ${sunken}
  border-top-width: 2px;
  flex: 1;
  min-width: 0;
  height: 14px;
  margin: 0;
  padding: 0 2px;
  background: #fff;
  &:disabled { background: #f0f0f0; }
`;
const TextButton = styled(PushButton)<{ $w: number }>`
  width: ${(p) => p.$w}px;
`;
const Split = styled.div`
  flex: 1;
  min-height: 0;
  display: flex;
  gap: 5px;
`;
const TreePane = styled.div`
  width: 98px;
  flex: none;
  display: flex;
  flex-direction: column;
  justify-content: space-between;
  border: 2px solid;
  border-color: #7d7d7d #b5b5b5 #b5b5b5 #7d7d7d;
  background: #fff;
  overflow: hidden;
`;
const TreeList = styled.ul<{ $n: number }>`
  display: grid;
  grid-template-rows: repeat(${(p) => p.$n}, minmax(0, 1fr));
  height: ${(p) => Math.round((p.$n * 137) / 10)}px;
  margin: 0;
  padding: 0 0 0 1px;
  list-style: none;
`;
const TreeItem = styled.li<{ $root?: boolean }>`
  display: flex;
  align-items: center;
  min-height: 0;
  gap: 1px;
  padding-left: ${(p) => (p.$root ? 0 : 14)}px;
  line-height: 12px;
  white-space: nowrap;
`;
const NodeArt = styled.svg`
  width: 15px;
  height: 14px;
  flex: none;
`;
const TreeNode = ({ text, root, last }: { text: string; root?: boolean; last?: boolean }) => {
  const open = text.startsWith('+');
  return (
    <TreeItem $root={root}>
      <NodeArt viewBox="0 0 15 14" aria-hidden="true">
        {!root && <path d={last ? 'M6.500 0v7' : 'M6.500 0v14'} stroke="#909090" strokeDasharray="1 1" />}
        <path d="M6 7.500h7" stroke="#909090" strokeDasharray="1 1" />
        {(open || root) && <path d="M3.500 4.500h6v6h-6z" fill="#fff" stroke="#7d7d7d" />}
        {(open || root) && <path d={open ? 'M5 7.500h3M6.500 6v3' : 'M5 7.500h3'} stroke="#222" />}
      </NodeArt>
      <span>{open ? text.slice(1) : text}</span>
    </TreeItem>
  );
};
const HScroll = styled.div`
  height: 13px;
  flex: none;
  display: flex;
  background: #f0f0f0;
`;
const HTrack = styled.div`
  flex: 1;
`;
const HThumb = styled.div<{ $w: number }>`
  width: ${(p) => p.$w}px;
  height: 100%;
  background: #cdcdcd;
`;
const FormPane = styled.div`
  flex: 1;
  min-width: 0;
  display: flex;
  flex-direction: column;
  gap: 1px;
`;
const EditorButtons = styled.div`
  display: grid;
  grid-template-columns: repeat(5, 1fr);
  gap: 2px;
  flex: none;
`;
const GroupBox = styled.fieldset`
  min-width: 0;
  margin: 0;
  padding: 2px 4px 3px;
  border: 1px solid #adadad;
`;
const Legend = styled.legend`
  padding: 0 2px;
  line-height: 12px;
`;
const Rows = styled.div<{ $n: number }>`
  display: flex;
  flex-direction: column;
  height: ${(p) => Math.round((p.$n * 178) / 10)}px;
`;
const Row = styled.div<{ $dim?: boolean }>`
  flex: 1;
  min-height: 0;
  display: flex;
  align-items: center;
  gap: 3px;
  color: ${(p) => (p.$dim ? '#a5a5a5' : 'inherit')};
  & > label { width: 141px; flex: none; white-space: nowrap; padding-bottom: 4px; }
`;
const CheckRow = styled.label`
  display: flex;
  align-items: center;
  justify-content: space-between;
  height: 17px;
  flex: none;
  padding-left: 1px;
`;
const Check = styled.input`
  ${sunken}
  appearance: none;
  width: 10px;
  height: 10px;
  margin: 0;
  background: #fff;
`;

type RowSpec = [label: string, value: string, icon: string, dim?: boolean, disabled?: boolean];
const groups: [string, RowSpec[]][] = [
  ['View to load details from', [['View', 'LS', 'viewGreen']]],
  ['Global variables', [['Text style', '1', 'bigT'], ['Plot symbols', '', 'folder', true]]],
  ['Section parameters', [
    ['Single string to plot', '', 'pick', true, true], ['Network model', '', 'layers', true],
    ['String name mask(s) for inclusion', '', 'abc', true], ['String name mask(s) for exclusion', '', 'abc', true],
    ['Exclude strings shorter than', '', 'measure', true], ['Horizontal scale', '1000', 'measure'], ['Vertical exaggeration', '10', 'measure'],
  ]],
  ['Sheet size setup', [['Sheet size wd ht (mm)', 'A1', 'drop']]],
  ['Plotter parameters', [['Plotter type', 'model', 'print'], ['Plot file stem', '', 'folder'], ['Digits in plot file number', '', 'digits', true]]],
];
const FormRow = ({ spec: [label, value, icon, dim, disabled] }: { spec: RowSpec }) => {
  const id = useId();
  return (
    <Row $dim={dim}>
      <label htmlFor={id}>{label}</label>
      <Field id={id} defaultValue={value} disabled={disabled} />
      <SquareButton aria-label={`Choose ${label}`}><Icon name={icon} size={13} /></SquareButton>
    </Row>
  );
};
const Editor = ({ title, x, y, h, nodes, thumb, children }: {
  title: string; x: number; y: number; h: number; nodes: string[]; thumb: number; children?: React.ReactNode;
}) => {
  const id = useId();
  return (
    <Dialog title={title} x={x} y={y} w={422} h={h}>
      <FileBox>
        <FileLabel htmlFor={id}>Plot parameter file</FileLabel>
        <Field id={id} />
        <SquareButton aria-label="Browse"><Icon name="folder" size={13} /></SquareButton>
        <TextButton $w={24}>Read</TextButton>
        <TextButton $w={26}>Write</TextButton>
      </FileBox>
      <Split>
        <TreePane>
          <TreeList $n={nodes.length}>
            {nodes.map((n, i) => <TreeNode key={`${n}${i}`} text={n} root={i === 0} last={i === nodes.length - 1} />)}
          </TreeList>
          <HScroll>
            <Arrow aria-label="Scroll left"><Chevron d="M6 1.500 3 4.500l3 3" /></Arrow>
            <HTrack><HThumb $w={thumb} /></HTrack>
            <Arrow aria-label="Scroll right"><Chevron d="M3 1.500l3 3-3 3" /></Arrow>
          </HScroll>
        </TreePane>
        <FormPane>{children}</FormPane>
      </Split>
      <Status>plotter ok</Status>
      <EditorButtons>{['Plot', 'Calc Num of Pages', 'Find', 'Finish', 'Help'].map((b) => <PushButton key={b}>{b}</PushButton>)}</EditorButtons>
    </Dialog>
  );
};
const longNodes = ['Section Long Plot', 'Notes', 'Plot to models', '+Plot sheet layout', '+Title block', 'Page area', '+Boxes', '+Chainages', '+Upright', '+Datum area', 'Graph area', '+Grids', '+Corridors', '+Bubbles', 'Quick', '+Extend', '+Quick', '+Extend', '+Labels', 'Labels', '+Hatching', '+Cuts', '+Paired', 'Primary', '+Scale', 'Plan', "PPF's to"];
const crossNodes = ['Section X Plot', 'Notes', 'Plot to models', 'Plot parameters', 'X sections', 'Extra X sections', '+Plot sheet layout', '+Title block', '+Boxes/Chainages', 'Graph area', '+Corridors', 'Grades', '+X-sections', '+Hatching', 'Cut/Fill areas', '+Cuts', '+Grids', '+Paired cuts', '+Paired points', '+Scale labels', "PPF's to include"];
const waterNodes = ['Water Long Section', 'Notes', 'Plot to models', '+Plot sheet layout', '+Title block', '+Boxes', '+Chainages/Uprights', '+Datum area', '+Arrows', 'Graph area', '+Grids', 'Top area', '+Corridors', '+Nodes', '+Property controls', '+Hatching cut/fill', '+Cuts', 'Primary string names', "PPF's to include"];

/* ---------- tabs and cursor ---------- */

const Tabs = styled.footer`
  height: 20px;
  flex: none;
  display: flex;
  align-items: center;
  padding-right: 3px;
  background: #f8f8f8;
`;
const Tab = styled.button<{ $on?: boolean }>`
  height: 17px;
  display: flex;
  align-items: center;
  gap: 2px;
  padding: 0 3px 0 2px;
  border: 0;
  border-right: 1px solid #bdbdbd;
  background: none;
  line-height: 11px;
  color: #8a8a8a;
  ${(p) => p.$on && css`height: 19px; padding: 0 5px; border-right-color: #666; border-bottom: 1px solid #666; background: #f0f0f0; color: #111; font-weight: 700;`}
`;
const Pointer = styled.svg`
  position: absolute;
  left: 314px;
  top: 102px;
  width: 10px;
  height: 16px;
`;

export default function App() {
  return (
    <Shell>
      <GlobalStyle />
      <CutBar>
        {cutItems.map(([w, c, v, grip], i) => (
          <React.Fragment key={i}>
            {w > 0 && <CutField $w={w} defaultValue={v} aria-label={`Setting ${i + 1}`} />}
            <CutButton $c={c} aria-label={`Pick ${i + 1}`} />
            {grip && <Grip />}
          </React.Fragment>
        ))}
      </CutBar>
      <ToolBar>
        <Grip />
        <Group names="newFile open save" width={49} />
        <Group names="importDisk exportDisk undo" width={60} menus />
        <Group names="redo gear" width={34} />
        <Grip />
        <Letters>{letters.map(([l, w, on]) => <Letter key={l} $w={w} $on={on} aria-pressed={on}>{l}</Letter>)}</Letters>
        <Grip />
        <Group names="folderCube folderOne folderTwo folderThree" width={82} menus />
        <Grip />
        <SearchField aria-label="Search" />
        <SearchButton aria-label="Find"><Icon name="search" /></SearchButton>
        <Grip />
        <Group names="snapPoint snapCross snapLine snapCircle snapArc" width={101} menus size={15} />
        <Grip />
        <Group names="notePencil tagPen sheetMove sheetCubes viewCubes layersCubes boxCubes fxCubes sectionCubes windowsBlue paste checklist" width={202} />
        <Grip />
        <Group names="tagAxis tagCh tagPctAxis tagPct tagZ tag1in tagArc tagX tag3d tagdZ tagbrg tagPct2 tag1in2" width={219} size={15} />
        <Grip />
        <Group names="fxA fxB sectPen ringPen" width={67} />
      </ToolBar>
      <Body>
        <Side>
          {sideGroups.map(([h, names], g) => (
            <React.Fragment key={g}>
              <SideGrip />
              <SideGroup $h={h}>{names.split(' ').map((n) => <Tool key={n} $menu={n !== 'pageCurve'} aria-label={n}><Icon name={n} size={14} /></Tool>)}</SideGroup>
            </React.Fragment>
          ))}
        </Side>
        <Main>
          <Mdi>
            <ChildWindow title="Plan 1" icon="planMark" active width={318} tools={['layout', 'plus', 'minus', ...commonTools]}>
              <SheetSizes />
              <Pointer viewBox="0 0 10 16"><path d="M1 1v11l2.500-2.500L5.500 14l2-1-2-4H9z" fill="#fff" stroke="#222" strokeWidth=".9" /></Pointer>
            </ChildWindow>
            <ChildWindow title="Section LS" icon="waveMark" active={false} width={437} zoom="10x" tools={['layout', 'plus', 'minus', 'waves', 'left', 'right', 'swoop', ...commonTools]}>
              <Editor title="Section Long Plot PPF Editor" x={8} y={7} h={537} nodes={longNodes} thumb={24} />
              <Editor title="Section X Plot PPF Editor" x={60} y={34} h={556} nodes={crossNodes} thumb={54}>
                <Push />
                <CheckRow>Calculate number of pages<Check type="checkbox" /></CheckRow>
              </Editor>
              <Editor title="Water Long Section Plot PPF Editor" x={131} y={61} h={485} nodes={waterNodes} thumb={34}>
                {groups.map(([name, rows]) => (
                  <GroupBox key={name}>
                    <Legend>{name}</Legend>
                    <Rows $n={rows.length}>{rows.map((r) => <FormRow key={r[0]} spec={r} />)}</Rows>
                  </GroupBox>
                ))}
                <CheckRow>Use drawing number as plot file number<Check type="checkbox" /></CheckRow>
                <CheckRow>Calculate number of pages<Check type="checkbox" /></CheckRow>
              </Editor>
            </ChildWindow>
          </Mdi>
          <Tabs>
            <Tab><Icon name="planMark" size={13} />SURVEY</Tab>
            <Tab><Icon name="planMark" size={13} />DESIGN</Tab>
            <Tab><Icon name="waveMark" size={13} />LS</Tab>
            <Tab><Icon name="waveMark" size={13} />XS</Tab>
            <Tab><Icon name="cube3d" size={13} />3D</Tab>
            <Tab $on><Icon name="planMark" size={13} />1</Tab>
            <Push />
            <Arrow aria-label="Previous tab"><Svg $s={7} viewBox="0 0 9 9"><path d="M6 1 2 4.500 6 8z" fill="none" stroke="#555" /></Svg></Arrow>
            <Arrow aria-label="Next tab"><Svg $s={7} viewBox="0 0 9 9"><path d="M3 1l4 3.500L3 8z" fill="none" stroke="#333" /></Svg></Arrow>
          </Tabs>
        </Main>
      </Body>
    </Shell>
  );
}
